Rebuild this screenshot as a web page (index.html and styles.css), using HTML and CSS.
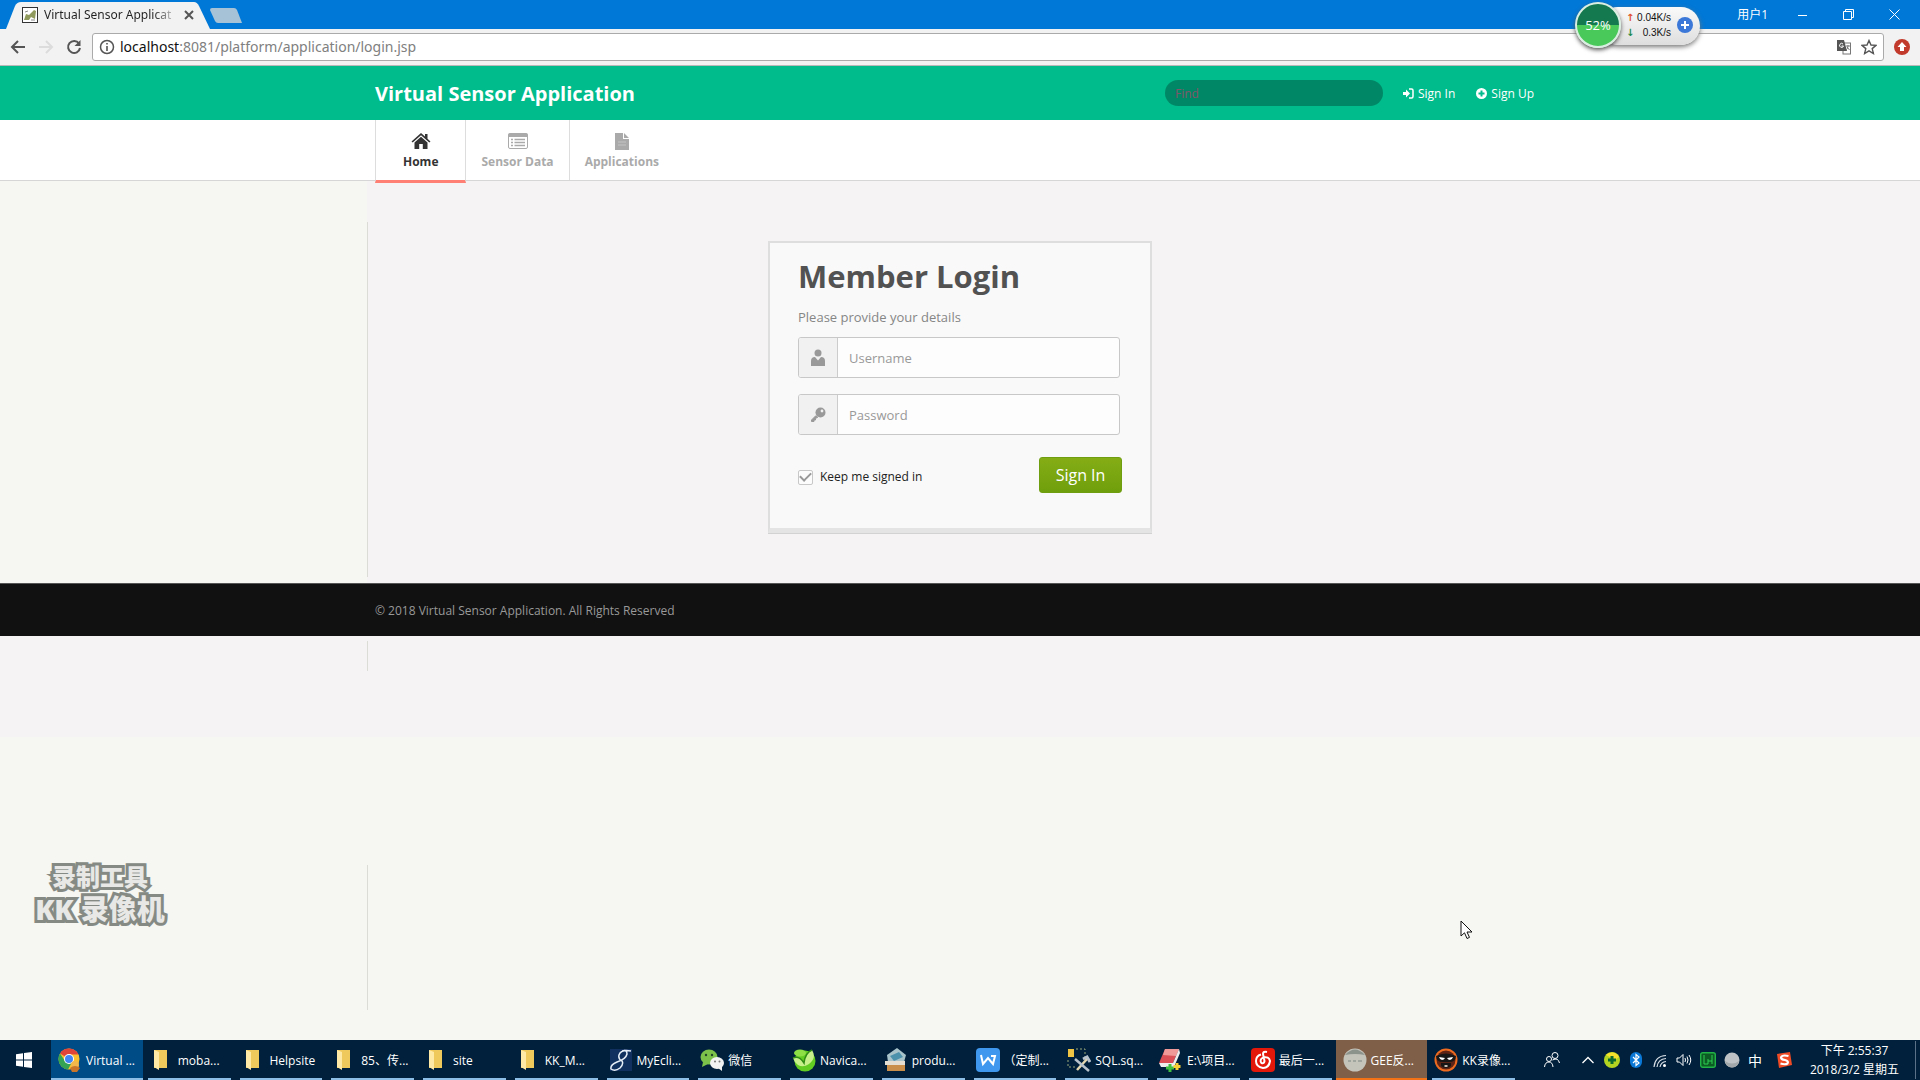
FILE: index.html
```html
<!DOCTYPE html>
<html lang="en">
<head>
    <meta charset="utf-8">
    <title>Virtual Sensor Application</title>
    <meta name="viewport" content="width=device-width, initial-scale=1">
    <link rel="stylesheet" href="styles.css">
</head>
<body>

<!-- browser window -->
<div class="tabstrip">
    <div class="tab">
        <svg class="tab-shape" viewBox="0 0 212 28" preserveAspectRatio="none"><path d="M6 28 L15 5 Q17 1 21 1 H194 Q197 1 199 5 L210 28 Z" fill="#f2f2f2"/></svg>
        <svg class="favicon" width="16" height="16" viewBox="0 0 16 16"><rect x=".5" y=".5" width="15" height="15" fill="#fff" stroke="#333"/><path d="M2 13 L4 7 L7 8 L12 3 L14 4 L13 12 L9 10 L7 13 Z" fill="#8f9a5c"/><path d="M3 5 L6 4 M9 13 L13 13" stroke="#888" fill="none"/></svg>
        <span class="tab-title">Virtual Sensor Applicat</span>
        <button class="tab-close" aria-label="Close tab"><svg width="10" height="10" viewBox="0 0 10 10"><path d="M1 1 L9 9 M9 1 L1 9" stroke="#555" stroke-width="2"/></svg></button>
    </div>
    <button class="new-tab" aria-label="New tab"><svg width="32" height="15" viewBox="0 0 32 15"><path d="M2 0 H24 Q26 0 27 2 L32 15 H8 Q6 15 5 13 L0 2 Q0 0 2 0 Z" fill="#a6c2d6"/></svg></button>
    <div class="window-buttons">
        <span class="profile">用户1</span>
        <button aria-label="Minimize"><svg width="11" height="11" viewBox="0 0 11 11"><path d="M1 6.500 H10" stroke="#fff"/></svg></button>
        <button aria-label="Restore"><svg width="11" height="11" viewBox="0 0 11 11"><path d="M.5 2.500 H8.500 V10.500 H.5 Z M2.500 2.500 V.5 H10.500 V8.500 H8.500" stroke="#fff" fill="none"/></svg></button>
        <button aria-label="Close"><svg width="11" height="11" viewBox="0 0 11 11"><path d="M.5 .5 L10.500 10.500 M10.500 .5 L.5 10.500" stroke="#fff"/></svg></button>
    </div>
</div>

<div class="toolbar">
    <button aria-label="Back"><svg width="16" height="16" viewBox="0 0 16 16"><path d="M15 8 H2 M8 2 L2 8 L8 14" stroke="#555" stroke-width="2" fill="none"/></svg></button>
    <button aria-label="Forward"><svg width="16" height="16" viewBox="0 0 16 16"><path d="M1 8 H14 M8 2 L14 8 L8 14" stroke="#dcdcdc" stroke-width="2" fill="none"/></svg></button>
    <button aria-label="Reload"><svg width="16" height="16" viewBox="0 0 16 16"><path d="M13 4.500 A6 6 0 1 0 14 9" stroke="#555" stroke-width="2" fill="none"/><path d="M14.500 1 V7 H8.500 Z" fill="#555"/></svg></button>
    <div class="omnibox">
        <svg width="16" height="16" viewBox="0 0 16 16"><circle cx="8" cy="8" r="6.500" stroke="#555" stroke-width="1.500" fill="none"/><path d="M8 7 V12 M8 4 V5.600" stroke="#555" stroke-width="1.600"/></svg>
        <span class="url"><b>localhost</b>:8081/platform/application/login.jsp</span>
        <svg width="16" height="16" viewBox="0 0 16 16"><rect x="7" y="4" width="7.500" height="11" fill="#fff" stroke="#777"/><path d="M1 1 H8 L11 12 H1 Z" fill="#555"/><path d="M7 5 A2 2 0 1 0 7.500 7 H5.500" stroke="#fff" fill="none"/><path d="M10 7 H14 M12 6 V7 Q12 10 10 11 M11 8 L13.500 11" stroke="#777" fill="none"/></svg>
        <svg width="16" height="16" viewBox="0 0 16 16"><path d="M8 1.500 L10 6 L15 6.400 L11.200 9.600 L12.400 14.500 L8 11.900 L3.600 14.500 L4.800 9.600 L1 6.400 L6 6 Z" stroke="#555" stroke-width="1.400" fill="none"/></svg>
    </div>
    <button class="update" aria-label="Menu"><svg width="16" height="16" viewBox="0 0 16 16"><circle cx="8" cy="8" r="8" fill="#c23a2c"/><path d="M8 3 L12.500 8 H10 V12 H6 V8 H3.500 Z" fill="#fff"/></svg></button>
</div>

<!-- page -->
<header class="header">
    <div class="container">
        <a class="brand" href="#">Virtual Sensor Application</a>
        <input class="search" type="search" placeholder="Find" aria-label="Find">
        <a class="header-link" href="#"><svg width="11" height="11" viewBox="0 0 11 11"><path d="M0 4 H3 V1.500 L7 5.500 L3 9.500 V7 H0 Z" fill="#fff"/><path d="M6 1 H8.500 Q10 1 10 2.500 V8.500 Q10 10 8.500 10 H6" stroke="#fff" stroke-width="1.500" fill="none"/></svg>Sign In</a>
        <a class="header-link" href="#"><svg width="11" height="11" viewBox="0 0 11 11"><circle cx="5.500" cy="5.500" r="5.500" fill="#fff"/><path d="M5.500 2.500 V8.500 M2.500 5.500 H8.500" stroke="#00ba8b" stroke-width="2"/></svg>Sign Up</a>
    </div>
</header>

<nav class="nav">
    <div class="container">
        <a class="nav-item active" href="#">
            <svg width="20" height="18" viewBox="0 0 20 18"><path d="M10 1 L14 4.500 V2 H16.500 V6.700 L19.500 9.400 L18.300 10.500 L10 3.300 L1.700 10.500 L.5 9.400 Z M10 4.800 L16.500 10.400 V17 H11.800 V12 H8.200 V17 H3.500 V10.400 Z" fill="#333"/></svg>
            Home
        </a>
        <a class="nav-item" href="#">
            <svg width="20" height="18" viewBox="0 0 20 18"><path d="M.5 3 Q.5 1.500 2 1.500 H18 Q19.500 1.500 19.500 3 V15 Q19.500 16.500 18 16.500 H2 Q.5 16.500 .5 15 Z" fill="#fff" stroke="#aaa"/><path d="M.5 1.500 H19.500 V5 H.5 Z" fill="#aaa"/><path d="M3 7.500 H5 M6.500 7.500 H17 M3 10.500 H5 M6.500 10.500 H17 M3 13.500 H5 M6.500 13.500 H17" stroke="#aaa" stroke-width="1.300"/></svg>
            Sensor Data
        </a>
        <a class="nav-item" href="#">
            <svg width="20" height="18" viewBox="0 0 20 18"><path d="M3 1 H11 V7 H17 V18 H3 Z M12 1 L17 6 H12 Z" fill="#aaa"/><path d="M6 10 H14 M6 13 H14" stroke="#c4c4c4"/></svg>
            Applications
        </a>
    </div>
</nav>

<main class="main">
    <form class="login">
        <h1>Member Login</h1>
        <p>Please provide your details</p>
        <div class="field">
            <label for="username"><svg width="16" height="18" viewBox="0 0 16 18"><circle cx="8" cy="4" r="3.500" fill="#999"/><path d="M1 17 V12 Q1 8 5 8 L8 11.500 L11 8 Q15 8 15 12 V17 Z" fill="#999"/></svg></label>
            <input type="text" id="username" placeholder="Username" aria-label="Username">
        </div>
        <div class="field">
            <label for="password"><svg width="16" height="16" viewBox="0 0 16 16"><path d="M6 8.500 L1.500 13 V14.500 H4 V13 H5.500 V11.500 L8 10" fill="#999" stroke="#999"/><circle cx="10.500" cy="5.500" r="5" fill="#999"/><circle cx="12" cy="4" r="1.400" fill="#f1f1f1"/></svg></label>
            <input type="password" id="password" placeholder="Password" aria-label="Password">
        </div>
        <div class="actions">
            <input type="checkbox" id="keep" checked>
            <label for="keep">Keep me signed in</label>
            <button type="button">Sign In</button>
        </div>
    </form>
</main>

<footer class="footer">
    <div class="container">© 2018 Virtual Sensor Application. All Rights Reserved</div>
</footer>

<div class="rest"><div class="rest-line"></div><div class="rest-line lower"></div></div>

<!-- desktop overlays -->
<div class="watermark"><span>录制工具</span><span class="big">KK 录像机</span></div>

<div class="speed">
    <span class="ball">52%</span>
    <span class="rates"><span><i class="up">↑</i>0.04K/s</span><span><i class="down">↓</i>0.3K/s</span></span>
    <svg width="16" height="16" viewBox="0 0 16 16"><circle cx="8" cy="8" r="8" fill="#3b78d8"/><path d="M8 4 V12 M4 8 H12" stroke="#fff" stroke-width="2"/></svg>
</div>

<svg class="cursor" width="13" height="20" viewBox="0 0 13 20"><path d="M1 1 V16 L4.500 12.800 L7 18.500 L9.500 17.400 L7 12 H12 Z" fill="#fff" stroke="#111"/></svg>

<div class="taskbar">
    <button class="start" aria-label="Start"><svg width="16" height="16" viewBox="0 0 16 16"><path d="M0 2.300 L7 1.300 V7.500 H0 Z M8 1.100 L16 0 V7.500 H8 Z M0 8.500 H7 V14.700 L0 13.700 Z M8 8.500 H16 V16 L8 14.900 Z" fill="#fff"/></svg></button>
    <div class="tasks">
        <button class="task current"><svg viewBox="0 0 24 24"><circle cx="11" cy="11" r="10.500" fill="#fbc02d"/><path d="M11 11 L2 5.500 A10.500 10.500 0 0 1 20.500 6.500 H11 Z" fill="#e04438"/><path d="M2 5.500 A10.500 10.500 0 0 0 10 21.500 L14 14 L7 13 Z" fill="#34a353"/><circle cx="11" cy="11" r="5" fill="#fff"/><circle cx="11" cy="11" r="4" fill="#4285f4"/><circle cx="17" cy="17" r="4" fill="#f2b84b"/><path d="M12 20 Q17 16 22 20 L19 24 H14 Z" fill="#c9762b"/></svg>Virtual ...</button>
        <button class="task"><svg viewBox="0 0 24 24"><path d="M4 2 H17 V20 H4 Z" fill="#f0c95c"/><path d="M4 2 L9 4 V22 L4 19 Z" fill="#ffe9a6"/></svg>moba...</button>
        <button class="task"><svg viewBox="0 0 24 24"><path d="M4 2 H17 V20 H4 Z" fill="#f0c95c"/><path d="M4 2 L9 4 V22 L4 19 Z" fill="#ffe9a6"/></svg>Helpsite</button>
        <button class="task"><svg viewBox="0 0 24 24"><path d="M4 2 H17 V20 H4 Z" fill="#f0c95c"/><path d="M4 2 L9 4 V22 L4 19 Z" fill="#ffe9a6"/></svg>85、传...</button>
        <button class="task"><svg viewBox="0 0 24 24"><path d="M4 2 H17 V20 H4 Z" fill="#f0c95c"/><path d="M4 2 L9 4 V22 L4 19 Z" fill="#ffe9a6"/></svg>site</button>
        <button class="task"><svg viewBox="0 0 24 24"><path d="M4 2 H17 V20 H4 Z" fill="#f0c95c"/><path d="M4 2 L9 4 V22 L4 19 Z" fill="#ffe9a6"/></svg>KK_M...</button>
        <button class="task"><svg viewBox="0 0 24 24"><rect x="1" y="1" width="22" height="22" fill="#12305f"/><path d="M22 3 Q12 1 10 7 Q9 11 13 13 Q15 16 11 20 Q6 24 2 21 Q1 17 8 14 Q17 11 18 6 Q18 1 13 3" stroke="#e6edf6" stroke-width="1.500" fill="none"/></svg>MyEcli...</button>
        <button class="task"><svg viewBox="0 0 24 24"><ellipse cx="9" cy="9" rx="8.500" ry="7.500" fill="#7cc24a"/><path d="M3 14 L2 19 L8 16 Z" fill="#7cc24a"/><ellipse cx="17" cy="15" rx="7" ry="6" fill="#f2f2f2"/><path d="M18 20 L22 23 V18 Z" fill="#f2f2f2"/><circle cx="6" cy="7" r="1.200" fill="#23452a"/><circle cx="12" cy="7" r="1.200" fill="#23452a"/><circle cx="15" cy="13.500" r="1" fill="#777"/><circle cx="19.500" cy="13.500" r="1" fill="#777"/></svg>微信</button>
        <button class="task"><svg viewBox="0 0 24 24"><circle cx="13" cy="13" r="10.500" fill="#63cc22"/><ellipse cx="8" cy="5" rx="6" ry="3.500" fill="#8ede45"/><path d="M1 10 Q7 7 12 15 Q13 5 20 2 Q25 10 17 16 Q11 20 6 17 Q2 14 1 10 Z" fill="#c8f08a"/><path d="M1 10 Q7 7 12 15 Q13 5 20 2" stroke="#2f8a16" stroke-width="1.500" fill="none"/></svg>Navica...</button>
        <button class="task"><svg viewBox="0 0 24 24"><path d="M3 7 L13 0 L22 7 L20 14 H4 Z" fill="#a9c3cb"/><path d="M6 8 L15 4 L19 9 L10 13 Z" fill="#4d92ad"/><path d="M1 13 H21 V17 H1 Z" fill="#e4ded2"/><path d="M3 17 H21 V23 H3 Z" fill="#c98e4a"/></svg>produ...</button>
        <button class="task"><svg viewBox="0 0 24 24"><rect width="24" height="24" rx="4" fill="#3f98ee"/><path d="M5 7 L7 16 L12 10 L17 16 L19 8 H15" stroke="#fff" stroke-width="2" fill="none"/></svg>（定制...</button>
        <button class="task"><svg viewBox="0 0 24 24"><path d="M1 1 H7 V9 H1 Z" fill="#efc445"/><path d="M9 1 H18 V9 M1 12 V19 H9" stroke="#98a878" stroke-dasharray="2 2" fill="none"/><path d="M10 22 L20 11" stroke="#e5d8b0" stroke-width="2.500"/><path d="M8 11 L22 23" stroke="#b7c2cc" stroke-width="2.500"/><path d="M16 11 L20 9 L23 14" stroke="#b7c2cc" stroke-width="3" fill="none"/></svg>SQL.sq...</button>
        <button class="task"><svg viewBox="0 0 24 24"><path d="M6 1 H20 L14 15 H0 Z" fill="#d94f55"/><path d="M6 1 H20 L17 8 L4 7 Z" fill="#ef9a98"/><path d="M0 15 H14 L20 1 L21 5 L15 19 H2 Z" fill="#eee"/><path d="M11 16 V24 M7 20 H15" stroke="#3fbf3f" stroke-width="3"/><path d="M18 15 V22 M14.500 18.500 H21.500" stroke="#f5cf35" stroke-width="3"/></svg>E:\项目...</button>
        <button class="task"><svg viewBox="0 0 24 24"><rect width="24" height="24" rx="4" fill="#e3170a"/><path d="M16 4 Q12 3 12 6 L13.500 13 Q13 16 10.500 15 Q8 12 12 9.500 Q18 8 19 13 Q18 20 12 20 Q5 19 5 13 Q5 8 10 6.500" stroke="#fff" stroke-width="2" fill="none"/></svg>最后一...</button>
        <button class="task alert"><svg viewBox="0 0 24 24"><circle cx="12" cy="12" r="11.500" fill="#c5c4bb"/><path d="M2 7 Q12 -4 22 7 Q12 5 2 7 Z" fill="#8b938b"/><path d="M5 13 H8 M10 13 H13 M15 13 H19" stroke="#a0a59d" stroke-width="2"/></svg>GEE反...</button>
        <button class="task"><svg viewBox="0 0 24 24"><circle cx="12" cy="12" r="11.500" fill="#ed6b21"/><circle cx="12" cy="12" r="9.500" fill="#5e2415"/><path d="M2 8 Q12 3 22 8 Q22 14 15 14 H9 Q2 14 2 8 Z" fill="#171717"/><path d="M5 9 L11 10 Q10 12 8 12 Q6 12 5 9 Z M19 9 L13 10 Q14 12 16 12 Q18 12 19 9 Z" fill="#fff"/><path d="M7 15 H17 V18 Q12 22 7 18 Z" fill="#171717"/><path d="M10.500 18 H13.500" stroke="#c9bcb3" stroke-width="2"/></svg>KK录像...</button>
    </div>
    <div class="tray">
        <svg class="people" width="16" height="16" viewBox="0 0 16 16"><g stroke="#fff" fill="none"><circle cx="5" cy="7" r="2.500"/><path d="M.5 15 Q1 10 5 10 Q8.500 10 9 15"/><circle cx="11" cy="3.500" r="3"/><path d="M8.500 8 Q14 5 15.500 11"/></g></svg>
        <svg width="16" height="16" viewBox="0 0 16 16"><path d="M2.500 11 L8 5.500 L13.500 11" stroke="#fff" stroke-width="1.300" fill="none"/></svg>
        <svg width="16" height="16" viewBox="0 0 16 16"><circle cx="8" cy="8" r="8" fill="#b4d422"/><path d="M2 3 A8 8 0 0 1 15 5 L11 8 Z" fill="#f5e02e"/><path d="M8 4 V12 M4 8 H12" stroke="#0d6b2d" stroke-width="3"/></svg>
        <svg width="16" height="16" viewBox="0 0 16 16"><rect x="2" width="12" height="16" rx="6" fill="#0a78d6"/><path d="M5 5 L11 11 L8 13.500 V2.500 L11 5 L5 11" stroke="#fff" stroke-width="1.200" fill="none"/></svg>
        <svg width="16" height="16" viewBox="0 0 16 16"><g stroke="#d7dee6" stroke-width="1.200" fill="none"><path d="M2 15 Q3 4 14 3.500"/><path d="M5 15 Q6 7 14 6.500"/><path d="M8 15 Q9 10 14 9.500"/></g><circle cx="12.500" cy="13.500" r="1.500" fill="#fff"/></svg>
        <svg width="16" height="16" viewBox="0 0 16 16"><path d="M1 6 H3.500 L7 2.500 V13.500 L3.500 10 H1 Z M9 6 Q10 8 9 10 M11 4.500 Q13 8 11 11.500 M13 3 Q16.500 8 13 13" stroke="#fff" fill="none"/></svg>
        <svg width="16" height="16" viewBox="0 0 16 16"><rect x=".7" y=".7" width="14.600" height="14.600" rx="2" fill="#0c5b24" stroke="#21b345" stroke-width="1.400"/><path d="M4 3 V12 H8 V7 M12 3 V12 M8 9 H12" stroke="#2ccf52" fill="none"/></svg>
        <svg width="16" height="16" viewBox="0 0 16 16"><circle cx="8" cy="8" r="7.500" fill="#bfc3c5"/><path d="M1 9 Q8 14 15 9 Q14 15 8 15.500 Q2 15 1 9 Z" fill="#a2a8aa"/></svg>
        <span class="ime">中</span>
        <svg width="16" height="16" viewBox="0 0 16 16"><path d="M1 2 L14 0 L16 13 L3 16 Z" fill="#ef4b24"/><path d="M12.500 4 Q6 2.500 5 5.500 Q5 7.500 9 8 Q13 9 11.500 11.500 Q9 13 4.500 11.500" stroke="#fff" stroke-width="2.200" fill="none"/></svg>
        <div class="clock"><span>下午 2:55:37</span><span>2018/3/2 星期五</span></div>
    </div>
</div>

</body>
</html>
```
FILE: styles.css
```css
* { box-sizing: border-box; }
body { margin: 0; min-height: 100vh; display: flex; flex-direction: column; position: relative; font-family: "Open Sans", "Noto Sans CJK SC", sans-serif; font-size: 12px; color: #333; background: #f6f6f2; }
button { padding: 0; border: none; background: none; font-family: inherit; display: flex; align-items: center; }
a { text-decoration: none; }
svg { flex: none; display: block; }

/* browser window */
.tabstrip { height: 29px; background: #0078d7; display: flex; align-items: flex-start; }
.tab { position: relative; width: 210px; height: 29px; padding: 0 16px 0 22px; display: flex; align-items: center; }
.tab > * { position: relative; }
.tab .tab-shape { position: absolute; left: 0; top: 1px; width: 212px; height: 28px; }
.tab-title { flex: 1; margin-left: 6px; font-family: "Noto Sans", sans-serif; font-size: 12px; white-space: nowrap; color: transparent; background: linear-gradient(90deg, #222 110px, #ccc 130px); background-clip: text; }
.new-tab { margin-top: 8px; }
.window-buttons { margin-left: auto; display: flex; align-items: center; height: 28px; padding-right: 20px; gap: 35px; color: #fff; }
.profile { margin-right: -6px; }
.toolbar { height: 37px; background: #f2f2f2; border-bottom: 1px solid #b9b9b9; display: flex; align-items: center; padding: 0 10px; gap: 12px; }
.omnibox { flex: 1; height: 28px; margin: 0 -2px; background: #fff; border: 1px solid #aaa; border-radius: 3px; display: flex; align-items: center; gap: 9px; padding: 0 6px; }
.url { flex: 1; margin-left: -4px; font-family: "Noto Sans", sans-serif; font-size: 14px; line-height: 18px; color: #808080; }
.url b { font-weight: normal; color: #111; }

/* header */
.container { width: 1170px; max-width: 100%; margin: 0 auto; display: flex; align-items: center; }
.header { background: #00bb8b; height: 54px; display: flex; }
.brand { font-size: 20px; font-weight: bold; color: #fff; margin-right: auto; }
.search { width: 218px; height: 26px; border: none; border-radius: 13px; background: #008765; padding: 0 10px; font-family: inherit; font-size: 12px; margin-right: 20px; }
.search::placeholder { color: #80556a; }
.header-link { color: #fff; font-size: 12px; display: flex; align-items: center; gap: 4px; margin-right: 21px; }
.header-link:last-child { margin-right: 11px; }
.nav { position: relative; background: #fff; border-bottom: 1px solid #d6d6d6; height: 61px; }
.nav-item { height: 60px; padding: 12px 15px 0; border-right: 1px solid #ddd; display: flex; flex-direction: column; align-items: center; gap: 3px; font-weight: bold; line-height: 17px; color: #aaa; }
.nav-item:last-child { border-right: none; }
.nav-item.active { height: 63px; margin-bottom: -3px; padding: 12px 27px 0; border-left: 1px solid #ddd; border-bottom: 3px solid #ff7f74; color: #333; }

/* login */
.main { height: 402px; padding-top: 60px; background: linear-gradient(#dcdcd6, #dcdcd6) 367px 41px / 1px 355px no-repeat, linear-gradient(90deg, #f6f6f2 367px, #f5f3f3 367px); }
.login { width: 384px; height: 292px; margin: 0 auto; padding: 13px 28px 0; background: #f9f9f9; border: 2px solid #dedede; border-bottom: 5px solid #e4e4e4; box-shadow: 0 1px 0 #d2d2d2; }
.login h1 { margin: 0; font-size: 31px; line-height: 40px; color: #525252; }
.login p { margin: 11px 0 10px; font-size: 13px; line-height: 20px; color: #868686; }
.field { display: flex; width: 322px; height: 41px; margin-bottom: 16px; border: 1px solid #c8c8c8; border-radius: 3px; background: #fdfdfd; overflow: hidden; }
.field label { width: 39px; background: #f1f1f1; border-right: 1px solid #ccc; display: flex; align-items: center; justify-content: center; }
.field input { flex: 1; min-width: 0; border: none; background: none; padding: 0 11px; font-family: inherit; font-size: 13px; }
.field input::placeholder { color: #999; }
.actions { display: flex; align-items: center; margin-top: 22px; width: 324px; }
.actions input { appearance: none; width: 15px; height: 15px; margin: 4px 7px 0 0; border: 1px solid #c8c8c8; border-radius: 2px; background: #fcfcfc; display: flex; align-items: center; justify-content: center; }
.actions input:checked::before { content: ""; width: 9px; height: 5px; margin-bottom: 3px; border: solid #999; border-width: 0 0 2px 2px; transform: rotate(-45deg); }
.actions label { margin-top: 4px; font-size: 12px; line-height: 20px; color: #222; }
.actions button { width: 83px; height: 36px; margin-left: auto; justify-content: center; border-radius: 3px; border: 1px solid #6f9f10; background: linear-gradient(#85ad15, #6f9f0c); color: #fff; font-size: 16px; }

.footer { height: 53px; display: flex; background: #111; border-top: 1px solid #555; color: #999; }
.rest { flex: 1; position: relative; background: linear-gradient(#f5f3f3, #f5f3f3) 0 0 / 100% 101px no-repeat; }
.rest-line { width: 1px; height: 30px; margin: 5px 0 194px 367px; background: #dcdcd6; }
.rest-line.lower { height: 145px; margin-bottom: 0; }

/* overlays */
.watermark { position: absolute; left: 33px; top: 861px; width: 134px; display: flex; flex-direction: column; align-items: center; font-weight: 900; font-size: 24px; line-height: 32px; color: #e8e8e6; -webkit-text-stroke: 6px #858a84; paint-order: stroke fill; white-space: nowrap; }
.watermark .big { font-size: 28px; }
.speed { position: absolute; left: 1575px; top: 1px; height: 48px; display: flex; align-items: center; }
.speed::before { content: ""; position: absolute; left: 24px; right: -7px; top: 6px; height: 38px; border-radius: 19px; background: linear-gradient(#fafafa, #dedede); box-shadow: 0 2px 5px #777; }
.speed > * { position: relative; }
.ball { width: 46px; height: 46px; border-radius: 50%; border: 2px solid #d9eee0; background: linear-gradient(#14794f 0 50%, #48c95a 50%); box-shadow: 0 2px 4px #555; color: #fff; font-size: 13px; display: flex; align-items: center; justify-content: center; }
.rates { width: 56px; padding: 0 6px 0 5px; display: flex; flex-direction: column; font-family: "Liberation Sans", sans-serif; font-size: 10px; line-height: 15px; color: #111; }
.rates span { display: flex; justify-content: space-between; }
.rates i { font-style: normal; font-weight: bold; font-family: "DejaVu Sans", sans-serif; }
.up { color: #e0532f; }
.down { color: #1c8a4c; }
.cursor { position: absolute; left: 1460px; top: 920px; }

/* taskbar */
.taskbar { height: 40px; background: #00203c; display: flex; color: #fff; }
.start { width: 51px; padding-left: 16px; }
.tasks { flex: 1; display: flex; }
.task { flex: 1; min-width: 0; position: relative; gap: 4px; padding-left: 7px; color: #fff; font-size: 12px; white-space: nowrap; }
.task svg { width: 24px; height: 24px; }
.task::after { content: ""; position: absolute; left: 5px; right: 4px; bottom: 0; height: 2px; background: #8dbfe6; }
.task.current { background: #004c87; }
.task.alert { background: #805f48; }
.task.current::after, .task.alert::after { left: 0; right: 0; }
.task.alert::after { background: #f37216; }
.tray { width: 401px; padding-left: 25px; display: flex; align-items: center; gap: 8px; }
.people { margin-right: 12px; }
.ime { font-size: 14px; width: 20px; }
.clock { margin-left: 4px; flex: 1; margin-right: 4px; border-right: 1px solid #5a7187; text-align: center; display: flex; flex-direction: column; line-height: 19px; padding-right: 10px; white-space: nowrap; }
```
